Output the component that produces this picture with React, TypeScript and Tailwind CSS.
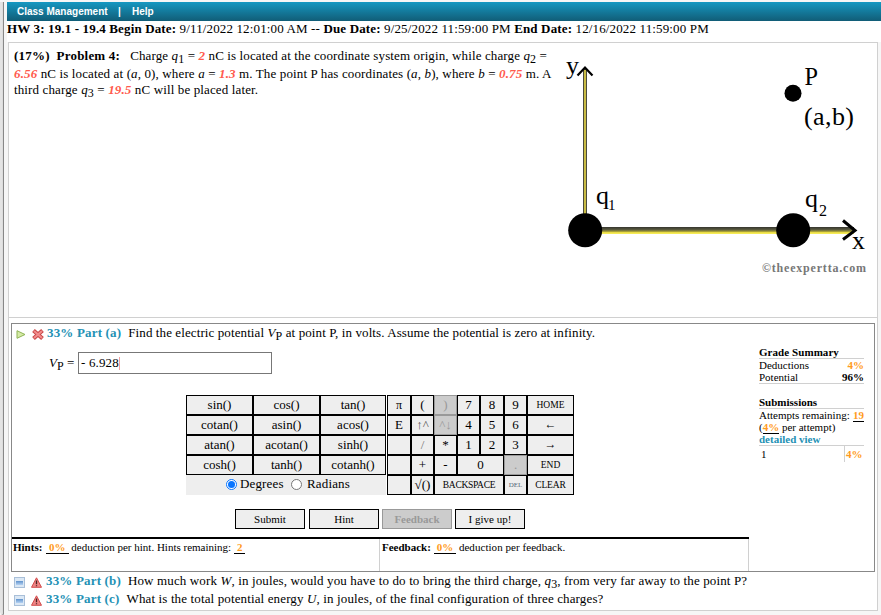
import type { ReactNode } from "react";

const cell = "flex items-center justify-center border border-black bg-[#eee] text-black overflow-hidden whitespace-nowrap";

function Red({ children }: { children: ReactNode }) {
  return <b className="italic text-[#ff5a4d]">{children}</b>;
}

function Sub({ children }: { children: ReactNode }) {
  return <span className="relative top-[3px] text-[12px] not-italic">{children}</span>;
}

function Key({ c, children }: { c: string; children?: ReactNode }) {
  return <div className={`${cell} ${c}`}>{children}</div>;
}

function Diagram() {
  return (
    <svg width="318" height="240" viewBox="560 50 318 240" className="block font-['Liberation_Serif',serif]">
      <defs>
        <linearGradient id="xaxis" x1="0" y1="0" x2="0" y2="1">
          <stop offset="0" stopColor="#35352f" />
          <stop offset=".4" stopColor="#5c5c40" />
          <stop offset=".65" stopColor="#a8a13a" />
          <stop offset=".8" stopColor="#f0e348" />
          <stop offset="1" stopColor="#f8ee60" />
        </linearGradient>
      </defs>
      <rect x="583" y="68" width="4" height="150" fill="#4b4b3b" />
      <rect x="584" y="70" width="2" height="148" fill="#c8bb45" />
      <path d="M577.5 75.5 L585 67.5 L592.5 75.5" fill="none" stroke="#000" strokeWidth="2.2" />
      <rect x="585" y="227" width="269" height="7" fill="url(#xaxis)" />
      <path d="M843 220.500 L855 230.500 L843 239.500" fill="none" stroke="#000" strokeWidth="3" />
      <circle cx="585.2" cy="230.300" r="17" />
      <circle cx="793.200" cy="230.300" r="17" />
      <circle cx="793" cy="93.300" r="8.500" />
      <g fontSize="26">
        <text x="566" y="74">y</text>
        <text x="804.500" y="85" fontSize="26" textLength="13.500" lengthAdjust="spacingAndGlyphs">P</text>
        <text x="804" y="125" textLength="50">(a,b)</text>
        <text x="596" y="204">q</text>
        <text x="608" y="210" fontSize="15">1</text>
        <text x="805" y="207">q</text>
        <text x="819" y="216" fontSize="16">2</text>
        <text x="852" y="249" fontSize="26">x</text>
      </g>
      <text x="762" y="272" fontSize="12" fontWeight="bold" fill="#777" textLength="104">©theexpertta.com</text>
    </svg>
  );
}

function Collapsed() {
  return (
    <svg width="11" height="11" viewBox="0 0 11 11" className="mr-[6px] mt-[2px] shrink-0">
      <defs>
        <linearGradient id="blue" x1="0" y1="0" x2="0" y2="1">
          <stop offset="0" stopColor="#5f92cc" />
          <stop offset="1" stopColor="#b5d2f2" />
        </linearGradient>
      </defs>
      <rect x=".5" y=".5" width="10" height="10" fill="#dbe8f5" stroke="#a9bfd8" />
      <rect x="2" y="4" width="7" height="4" fill="url(#blue)" />
    </svg>
  );
}

function Warning() {
  return (
    <svg width="11" height="11" viewBox="0 0 11 11" className="mr-[4px] mt-[2px] shrink-0">
      <path d="M5.500 .8 L10.500 10.300 H.5 Z" fill="#ee8585" stroke="#d34c4c" strokeLinejoin="round" />
      <path d="M5.500 3.500 V7.200 M5.500 8.200 V9.300" stroke="#4b2020" strokeWidth="1.300" />
    </svg>
  );
}

const functions = ["sin()", "cos()", "tan()", "cotan()", "asin()", "acos()", "atan()", "acotan()", "sinh()", "cosh()", "tanh()", "cotanh()"];
const off = "!bg-[#ccc] !border-[#999] !text-[#999]";

export default function App() {
  return (
    <div className="flex h-[615px] w-[881px] overflow-hidden bg-[#f6f6f6] pt-[2px] font-['Liberation_Serif','Times_New_Roman',serif] text-[13px] leading-[16px] text-black">
      <div className="h-[613px] w-[4px] shrink-0 rounded-bl-[5px] border-b border-l-2 border-r border-b-[#999] border-l-[#e4e4e4] border-r-[#888] bg-[#ddd]" />
      <div className="ml-[3px] flex w-[874px] flex-col">
        <div className="flex h-[19px] shrink-0 items-center whitespace-pre bg-linear-to-b from-[#1598c2] to-[#115d77] pl-[10px] font-['Liberation_Sans',Arial,sans-serif] text-[10px] font-bold leading-[19px] text-white">
          <span className="w-[101px]">Class Management</span>
          <span className="w-[14px]">|</span>
          <span>Help</span>
        </div>
        <div className="h-[21px] shrink-0 whitespace-nowrap bg-white">
          <span className="tracking-[0.14px]"><b>HW 3: 19.1 - 19.4 Begin Date:</b> 9/11/2022 12:01:00 AM -- <b>Due Date:</b> 9/25/2022 11:59:00 PM <b>End Date:</b> 12/16/2022 11:59:00 PM</span>
        </div>
        <div className="ml-[1px] flex h-[569px] w-[870px] shrink-0 flex-col border border-[#d0d0d0] bg-white">
          <div className="flex h-[275px] shrink-0 border-b border-[#d0d0d0]">
            <div className="w-[551px] shrink-0 whitespace-pre pl-[5px] pt-[4px] leading-[17px]">
              <div className="h-[18px]"><span className="tracking-[0.12px]"><b className="tracking-[0.2px]">(17%)  Problem 4:</b>   Charge <i>q</i><Sub>1</Sub> = <Red>2</Red> nC is located at the coordinate system origin, while charge <i>q</i><Sub>2</Sub> =</span></div>
              <div className="h-[16px]"><span className="tracking-[0.13px]"><Red>6.56</Red> nC is located at (<i>a</i>, 0), where <i>a</i> = <Red>1.3</Red> m. The point P has coordinates (<i>a</i>, <i>b</i>), where <i>b</i> = <Red>0.75</Red> m. A</span></div>
              <div className="h-[17px]"><span className="tracking-[0.13px]">third charge <i>q</i><Sub>3</Sub> = <Red>19.5</Red> nC will be placed later.</span></div>
            </div>
            <div className="mt-[7px]"><Diagram /></div>
          </div>
          <div className="ml-[2px] mt-[5px] flex h-[249px] w-[864px] shrink-0 border border-[#888]">
            <div className="flex w-[738px] shrink-0 flex-col">
              <div className="flex h-[18px] items-center whitespace-pre pl-[4px]">
                <svg width="10" height="9" viewBox="0 0 10 9" className="mr-[6px] mt-[3px]"><path d="M1 .7 L9 4.500 L1 8.300 Z" fill="#d5eaa5" stroke="#8eb356" /></svg>
                <svg width="12" height="11" viewBox="0 0 12 11" className="mr-[3px] mt-[3px]"><path d="M1.500 1.500 L10.500 9.500 M10.500 1.500 L1.500 9.500" stroke="#c84444" strokeWidth="4" /><path d="M2 2 L10 9 M10 2 L2 9" stroke="#f18b8b" strokeWidth="2.200" /></svg>
                <b className="tracking-[0.17px] text-[#2491b5]">33% Part (a)</b>
                <span className="ml-[7px] tracking-[0.1px]">Find the electric potential <i>V</i><Sub>P</Sub> at point P, in volts. Assume the potential is zero at infinity.</span>
              </div>
              <div className="mt-[10px] flex h-[22px] items-center pl-[37px]">
                <span className="w-[29px] whitespace-nowrap"><i>V</i><Sub>P</Sub> =</span>
                <div className="flex h-[22px] w-[194px] items-center border border-[#777] pl-[2px] tracking-[0.15px]">- 6.928<span className="h-[13px] w-px bg-[#f5a0a0]" /></div>
              </div>
              <div className="ml-[174px] mt-[21px] flex h-[100px] gap-px">
                <div className="w-[200px] bg-[#eee]">
                  <div className="grid grid-cols-[67px_67px_66px] auto-rows-[20px]">
                    {functions.map((name) => <div key={name} className={cell}>{name}</div>)}
                  </div>
                  <div className="flex h-[18px] items-center pl-[40px] leading-[18px]">
                    <span className="mr-[3px] flex h-[11px] w-[11px] items-center justify-center rounded-full border border-[#0875ff] bg-white"><span className="h-[7px] w-[7px] rounded-full bg-[#0875ff]" /></span>
                    <span className="w-[51px] tracking-[0.15px]">Degrees</span>
                    <span className="mr-[5px] h-[11px] w-[11px] rounded-full border border-[#777] bg-white" />
                    <span className="tracking-[0.15px]">Radians</span>
                  </div>
                </div>
                <div className="grid grid-cols-[24px_23px_23px_23px_24px_23px_47px] grid-rows-[repeat(5,20px)]">
                  <Key c="text-[12px]">π</Key><Key c="">(</Key><Key c={off}>)</Key><Key c="">7</Key><Key c="">8</Key><Key c="">9</Key><Key c="text-[9.5px]">HOME</Key>
                  <Key c="">E</Key><Key c="!text-[#555]">↑^</Key><Key c={off}>^↓</Key><Key c="">4</Key><Key c="">5</Key><Key c="">6</Key><Key c="pb-[3px] text-[12px]">←</Key>
                  <Key c="" /><Key c="!text-[#777]">/</Key><Key c="">*</Key><Key c="">1</Key><Key c="">2</Key><Key c="">3</Key><Key c="pb-[3px] text-[12px]">→</Key>
                  <Key c="" /><Key c="">+</Key><Key c="">-</Key><Key c="col-span-2">0</Key><Key c={off}>.</Key><Key c="text-[9.5px]">END</Key>
                  <Key c="" /><Key c="">√()</Key><Key c="col-span-3 text-[9.5px] tracking-[-0.3px]">BACKSPACE</Key><Key c="text-[7px] !text-[#567]">DEL</Key><Key c="text-[9.5px] tracking-[-0.1px]">CLEAR</Key>
                </div>
              </div>
              <div className="ml-[223px] mt-[14px] flex h-[20px] text-[11px]">
                <div className={`${cell} mr-[4px] w-[70px]`}>Submit</div>
                <div className={`${cell} mr-[3px] w-[70px]`}>Hint</div>
                <div className={`${cell} ${off} mr-[3px] w-[70px] font-bold`}>Feedback</div>
                <div className={`${cell} w-[70px]`}>I give up!</div>
              </div>
              <div className="mt-[8px] flex h-[34px] w-[737px] border-t-2 border-black text-[11px] leading-[15px]">
                <div className="w-[368px] whitespace-nowrap border-r border-[#d0d0d0] pl-[1px] pt-[1px]">
                  <b>Hints:</b> <b className="ml-[1px] border-b border-black px-[3px] text-[#ff9b21]">0%</b> <span>deduction per hint. Hints remaining:</span> <b className="border-b border-black px-[3px] text-[#ff9b21]">2</b>
                </div>
                <div className="w-[369px] whitespace-nowrap border-r border-[#d0d0d0] pl-[2px] pt-[1px]">
                  <b>Feedback:</b> <b className="border-b border-black px-[3px] text-[#ff9b21]">0%</b> <span className="tracking-[0.05px]">deduction per feedback.</span>
                </div>
              </div>
            </div>
            <div className="ml-[9px] w-[105px] whitespace-nowrap pt-[22px] text-[11px] leading-[12px]">
              <div className="border-b border-[#d0d0d0]"><b className="tracking-[0.06px]">Grade Summary</b></div>
              <div className="flex justify-between"><span>Deductions</span><b className="text-[#ff9b21]">4%</b></div>
              <div className="flex justify-between border-b border-[#d0d0d0]"><span>Potential</span><b>96%</b></div>
              <div className="mt-[12px] border-b border-[#d0d0d0]"><b>Submissions</b></div>
              <div className="flex justify-between"><span>Attempts remaining:</span><b className="border-b border-black text-[#ff9b21]">19</b></div>
              <div className="-mt-px">(<b className="border-b border-black text-[#ff9b21]">4%</b> per attempt)</div>
              <div className="border-b border-[#d0d0d0] font-bold text-[#2491b5]">detailed view</div>
              <div className="flex h-[16px] justify-between pl-[2px] leading-[16px]"><span>1</span><b className="h-[16px] w-[20px] border-l border-[#d0d0d0] pl-[1px] text-[#ff9b21]">4%</b></div>
            </div>
          </div>
          <div className="flex h-[18px] items-center whitespace-pre pl-[5px]">
            <Collapsed /><Warning /><b className="tracking-[0.17px] text-[#2491b5]">33% Part (b)</b>
            <span className="ml-[7px] tracking-[0.13px]">How much work <i>W</i>, in joules, would you have to do to bring the third charge, <i>q</i><Sub>3</Sub>, from very far away to the point P?</span>
          </div>
          <div className="flex h-[18px] items-center whitespace-pre pl-[5px]">
            <Collapsed /><Warning /><b className="tracking-[0.17px] text-[#2491b5]">33% Part (c)</b>
            <span className="ml-[7px] tracking-[0.13px]">What is the total potential energy <i>U</i>, in joules, of the final configuration of three charges?</span>
          </div>
        </div>
      </div>
    </div>
  );
}
